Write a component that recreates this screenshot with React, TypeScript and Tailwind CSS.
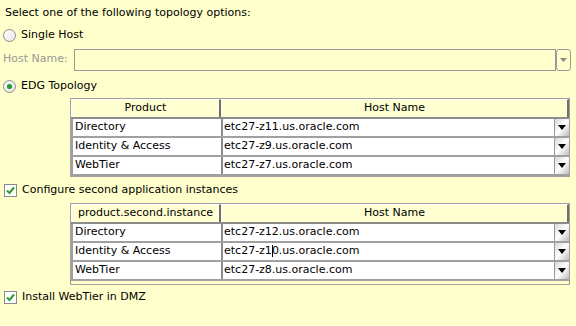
import React from "react";

const Radio = ({ checked }: { checked?: boolean }) => (
  <div className="w-[13px] h-[13px] rounded-full border border-[#8a8a8a] bg-gradient-to-br from-white to-[#e6e6e6] flex items-center justify-center shrink-0">
    {checked && <div className="w-[5px] h-[5px] rounded-full bg-[#2f9b2f] shadow-[0_0_1px_#7c7]" />}
  </div>
);

const Check = () => (
  <div className="w-[13px] h-[13px] border border-[#8a8a8a] bg-white flex items-center justify-center shrink-0">
    <svg width="9" height="9" viewBox="0 0 9 9">
      <path d="M1 4.5 L3.5 7 L8 1.5" stroke="#2f9b2f" strokeWidth="2" fill="none" />
    </svg>
  </div>
);

const DropBtn = () => (
  <div className="w-[15px] h-full bg-gradient-to-br from-[#d8d8d8] via-white to-[#bdbdbd] border-l border-[#9a9a9a] flex justify-center pt-[6px] shrink-0">
    <svg width="8" height="5" viewBox="0 0 8 5">
      <path d="M0 0 H8 L4 5 Z" fill="#000" />
    </svg>
  </div>
);

type Row = { product: string; host: React.ReactNode };

const Table = ({ header, rows, extra }: { header: string; rows: Row[]; extra?: boolean }) => (
  <div className="ml-[70px] w-[500px] border border-[#a0a0a0] bg-[#ffffcc]">
    <div className="flex h-[20px] border-b-2 border-[#8c8c8c]">
      <div className="w-[150px] flex items-center justify-center bg-[#ffffd2] border-t border-l border-white border-r-2 border-r-[#6e6e6e]">
        {header}
      </div>
      <div className="flex-1 flex items-center justify-center bg-[#ffffd2] border-t border-l border-white border-r-2 border-r-[#6e6e6e]">
        Host Name
      </div>
    </div>
    {rows.map((r, i) => (
      <div key={i} className="flex h-[19px] border-b-2 border-[#a0a0a0]">
        <div className="w-[150px] bg-white border-l-2 border-[#a0a0a0] pl-[2px] flex items-center">
          {r.product}
        </div>
        <div className="flex-1 bg-white border-l-2 border-[#8c8c8c] flex items-center">
          <div className="flex-1 pl-[1px]">{r.host}</div>
          <DropBtn />
        </div>
      </div>
    ))}
    {extra && <div className="h-[3px]" />}
  </div>
);

export default function App() {
  return (
    <div className="w-[576px] h-[326px] bg-[#ffffcc] text-black text-[11px] font-['DejaVu_Sans',sans-serif] overflow-hidden">
      <div className="h-[26px] flex items-center pl-[5px]">Select one of the following topology options:</div>
      <div className="h-[19px] flex items-center pl-[3px] gap-[5px]">
        <Radio />
        <span>Single Host</span>
      </div>
      <div className="h-[29px] flex items-center">
        <span className="w-[74px] pl-[3px] text-[#999999]">Host Name:</span>
        <div className="w-[482px] h-[22px] border border-[#9a9a9a]" />
        <div className="w-[15px] h-[22px] border border-[#9a9a9a] rounded-[3px] flex items-center justify-center">
          <svg width="7" height="4" viewBox="0 0 7 4">
            <path d="M0 0 H7 L3.5 4 Z" fill="#888" />
          </svg>
        </div>
      </div>
      <div className="h-[24px] flex items-center pl-[3px] gap-[5px]">
        <Radio checked />
        <span>EDG Topology</span>
      </div>
      <Table
        header="Product"
        rows={[
          { product: "Directory", host: "etc27-z11.us.oracle.com" },
          { product: "Identity & Access", host: "etc27-z9.us.oracle.com" },
          { product: "WebTier", host: "etc27-z7.us.oracle.com" },
        ]}
      />
      <div className="h-[26px] flex items-center pl-[4px] gap-[5px]">
        <Check />
        <span>Configure second application instances</span>
      </div>
      <Table
        header="product.second.instance"
        extra
        rows={[
          { product: "Directory", host: "etc27-z12.us.oracle.com" },
          {
            product: "Identity & Access",
            host: (
              <span>
                etc27-z1<span className="inline-block w-px h-[12px] bg-black align-middle -mr-[1px]" />0.us.oracle.com
              </span>
            ),
          },
          { product: "WebTier", host: "etc27-z8.us.oracle.com" },
        ]}
      />
      <div className="h-[24px] flex items-center pl-[4px] gap-[5px]">
        <Check />
        <span>Install WebTier in DMZ</span>
      </div>
    </div>
  );
}
